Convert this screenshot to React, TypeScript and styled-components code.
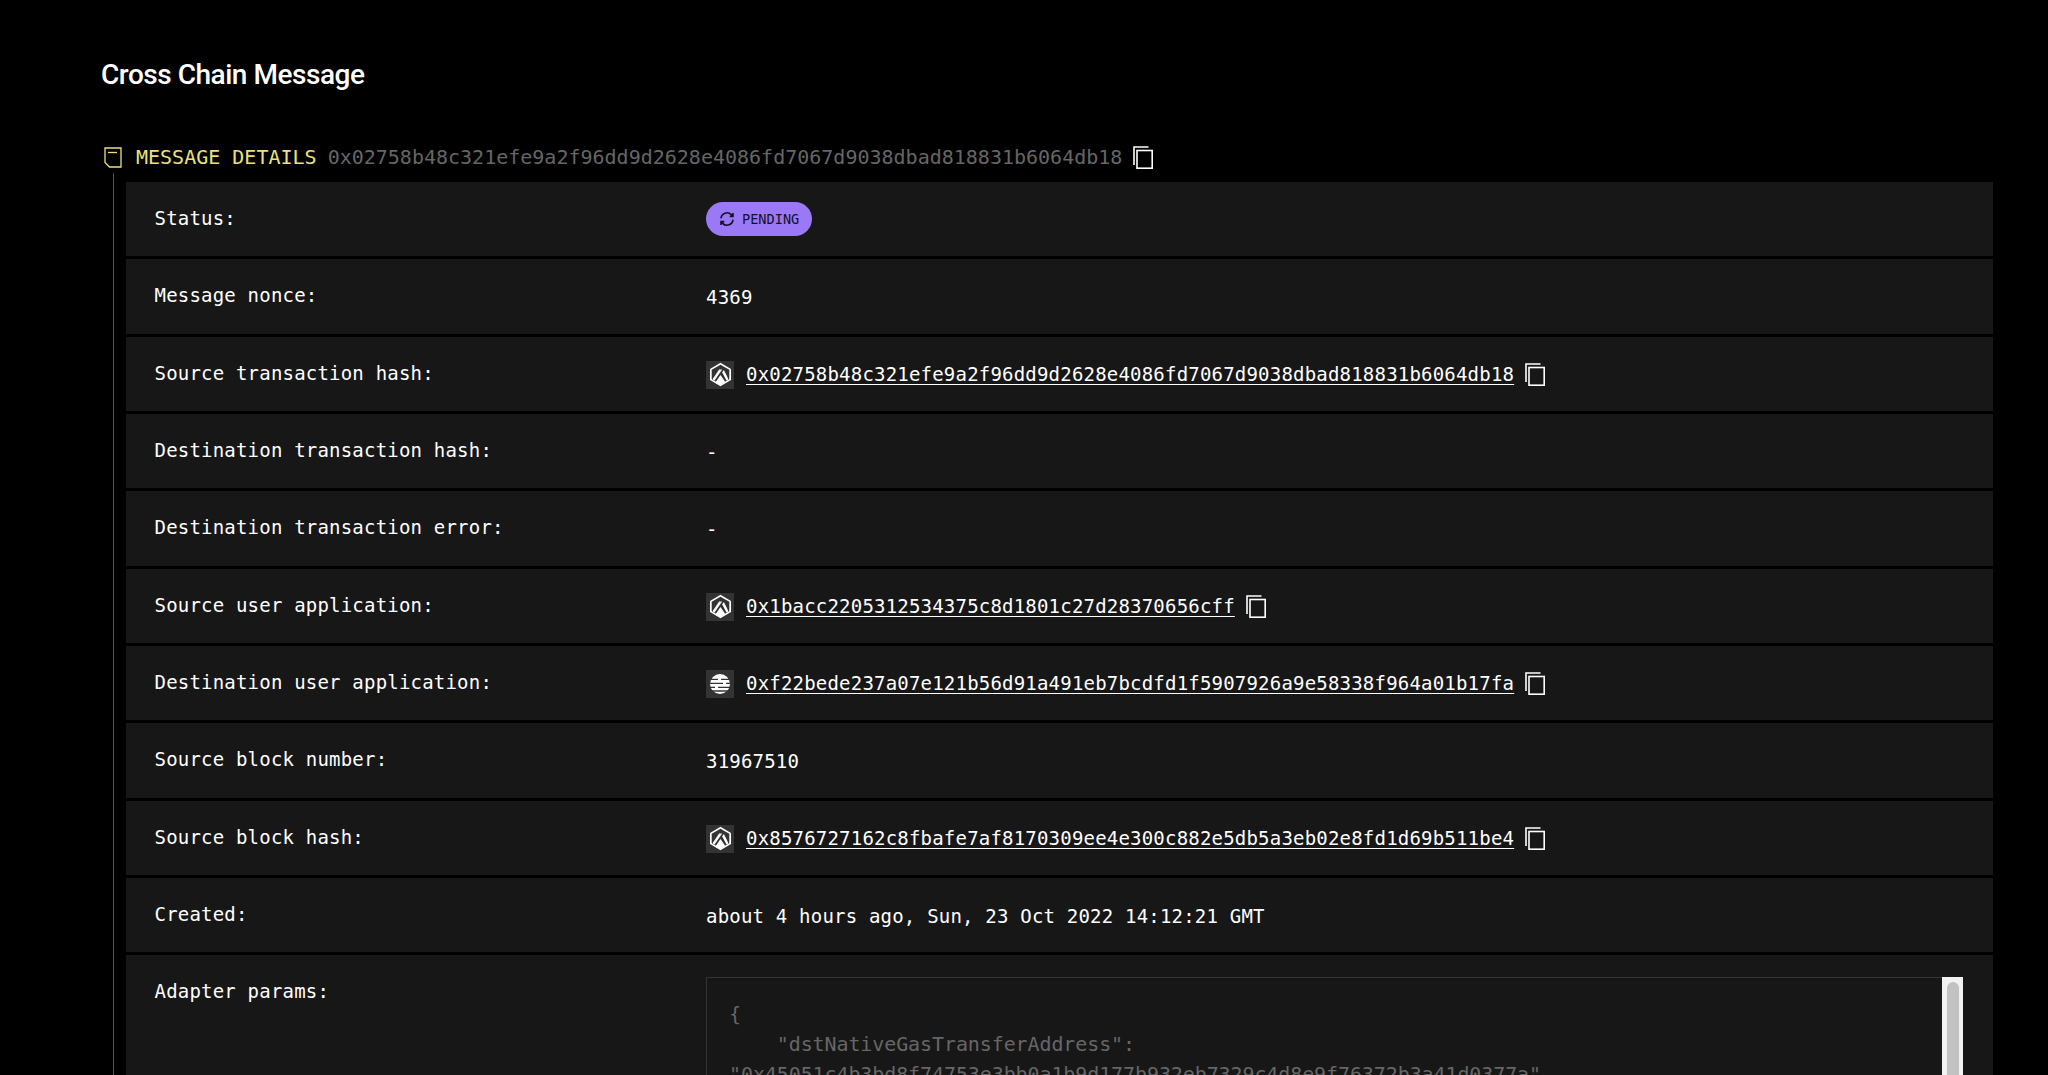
import styled, { createGlobalStyle } from 'styled-components'
import { ReactNode } from 'react'

const GlobalStyle = createGlobalStyle`
	html, body {
		margin: 0;
		height: 100%;
		overflow: hidden;
		background: #000;
	}
`

const ArbitrumIcon = () => (
	<svg width="25" height="25" viewBox="0 0 22 22" fill="none">
		<path d="M11 1.5 19.5 6.5V15.5L11 20.5 2.5 15.5V6.5Z" stroke="#fff" strokeWidth="1.5" strokeLinejoin="round" />
		<path d="M9.8 6.5H12.4L5.6 16.4 4 15.2Z" fill="#fff" />
		<path d="M12.4 9 14 7 18 15.2 16.4 16.4Z" fill="#fff" />
		<path d="M11 11.5 15.2 17.6 11 20.2 6.8 17.6Z" fill="#fff" />
	</svg>
)

const OptimismIcon = () => (
	<svg width="22" height="22" viewBox="0 0 22 22" fill="none">
		<circle cx="11" cy="11" r="10" fill="#fff" />
		<path d="M0 6.4H9M12 6.4H22M0 10.4H14M17 10.4H22M0 14.4H6M9 14.4H22M0 18H22" stroke="#333" strokeWidth="1.4" />
	</svg>
)

const CopyIcon = () => (
	<svg width="20" height="23" viewBox="0 0 20 23" fill="none" stroke="#fff" strokeWidth="1.6">
		<path d="M1 19V1H15.5" />
		<rect x="4" y="4.5" width="15.2" height="17.7" />
	</svg>
)

const NoteIcon = () => (
	<svg width="18" height="21" viewBox="0 0 18 21" fill="none" stroke="#ebe07e" strokeWidth="1.3">
		<path d="M1 1H17V20H5.5L1 15.5Z" />
		<path d="M4 5.5H13" />
	</svg>
)

const SyncIcon = () => (
	<svg width="16" height="16" viewBox="0 0 24 24" fill="none" stroke="#14102a" strokeWidth="2.4">
		<path d="M3 11a9 9 0 0 1 15.5-5.5L21 8M21 3v5h-5" />
		<path d="M21 13a9 9 0 0 1-15.5 5.5L3 16M3 21v-5h5" />
	</svg>
)

type Props = { label: string; children: ReactNode }
const Row = ({ label, children }: Props) => (
	<RowBox>
		<Label>{label}</Label>
		<Value>{children}</Value>
	</RowBox>
)

const Hash = ({ chain, text }: { chain: 'arb' | 'op'; text: string }) => (
	<HashLine>
		<ChainBox>{chain === 'arb' ? <ArbitrumIcon /> : <OptimismIcon />}</ChainBox>
		<HashLink>{text}</HashLink>
		<CopyIcon />
	</HashLine>
)

const params = `{
    "dstNativeGasTransferAddress": "0x45051c4b3bd8f74753e3bb0a1b9d177b932eb7329c4d8e9f76372b3a41d0377a",
    "dstNativeGasTransferAmount": "0",
    "type": 1
}`

export default function App(): JSX.Element {
	return (
		<Page>
			<GlobalStyle />
			<Title>Cross Chain Message</Title>
			<Header>
				<NoteIcon />
				<HeaderLabel>MESSAGE DETAILS</HeaderLabel>
				<HeaderHash>0x02758b48c321efe9a2f96dd9d2628e4086fd7067d9038dbad818831b6064db18</HeaderHash>
				<CopyIcon />
			</Header>
			<Rows>
				<Row label="Status:">
					<Badge><SyncIcon />PENDING</Badge>
				</Row>
				<Row label="Message nonce:">4369</Row>
				<Row label="Source transaction hash:">
					<Hash chain="arb" text="0x02758b48c321efe9a2f96dd9d2628e4086fd7067d9038dbad818831b6064db18" />
				</Row>
				<Row label="Destination transaction hash:">-</Row>
				<Row label="Destination transaction error:">-</Row>
				<Row label="Source user application:">
					<Hash chain="arb" text="0x1bacc2205312534375c8d1801c27d28370656cff" />
				</Row>
				<Row label="Destination user application:">
					<Hash chain="op" text="0xf22bede237a07e121b56d91a491eb7bcdfd1f5907926a9e58338f964a01b17fa" />
				</Row>
				<Row label="Source block number:">31967510</Row>
				<Row label="Source block hash:">
					<Hash chain="arb" text="0x8576727162c8fbafe7af8170309ee4e300c882e5db5a3eb02e8fd1d69b511be4" />
				</Row>
				<Row label="Created:">about 4 hours ago, Sun, 23 Oct 2022 14:12:21 GMT</Row>
				<Row label="Adapter params:">
					<ParamsBox>
						<Params>{params}</Params>
						<ScrollTrack>
							<ScrollThumb />
						</ScrollTrack>
					</ParamsBox>
				</Row>
			</Rows>
		</Page>
	)
}

const mono = `"DejaVu Sans Mono", "Liberation Mono", monospace`

const Page = styled.main`
	height: 1075px;
	overflow: hidden;
	padding: 57px 55px 0 101px;
	box-sizing: border-box;
	color: #fff;
`
const Title = styled.h1`
	margin: 0;
	font: 500 28px/36px Roboto, sans-serif;
	letter-spacing: -0.47px;
`
const Header = styled.div`
	display: flex;
	align-items: center;
	gap: 11px;
	margin-top: 52px;
	padding-left: 3px;
	height: 24px;
	font: 20px/24px ${mono};
`
const HeaderLabel = styled.span`
	margin-left: 3px;
	color: #ebe07e;
`
const HeaderHash = styled.span`
	color: #666;
`
const Rows = styled.div`
	display: flex;
	flex-direction: column;
	gap: 3px;
	margin-top: 4px;
	margin-left: 12px;
	padding: 9px 0 0 12px;
	border-left: 1px solid #555;
`
const RowBox = styled.div`
	display: grid;
	grid-template-columns: 551.5px 1fr;
	padding: 23px 30px 21.33px 28.5px;
	background: #171717;
`
const Label = styled.div`
	font: 19px/26px ${mono};
	letter-spacing: 0.2px;
	color: #fff;
`
const Value = styled.div`
	font: 19px/30px ${mono};
	letter-spacing: 0.2px;
	color: #fff;
`
const Badge = styled.span`
	display: flex;
	align-items: center;
	gap: 7px;
	width: fit-content;
	height: 34px;
	margin: -3px 0 -1px;
	padding: 0 13px;
	border-radius: 17px;
	background: #9b78f6;
	color: #14102a;
	font-size: 13.6px;
	letter-spacing: 0;
`
const HashLine = styled.div`
	display: flex;
	align-items: center;
	gap: 12px;
	height: 30px;
`
const ChainBox = styled.span`
	display: flex;
	align-items: center;
	justify-content: center;
	width: 28px;
	height: 28px;
	background: #333;
`
const HashLink = styled.a`
	margin: 0 -1px 2px 0;
	color: #fff;
	text-decoration: underline;
	text-underline-offset: 3px;
`
const ParamsBox = styled.div`
	position: relative;
	margin-top: -1px;
	height: 300px;
`
const Params = styled.pre`
	margin: 0;
	height: 100%;
	overflow: hidden;
	padding: 21px 45px 21px 22px;
	box-sizing: border-box;
	border: 1px solid #333;
	color: #666;
	font: 20px/30px ${mono};
	letter-spacing: -0.1px;
	white-space: pre-wrap;
`
const ScrollTrack = styled.div`
	position: absolute;
	top: 0;
	right: 0;
	bottom: 0;
	width: 21px;
	padding: 5px 4px 5px 5px;
	box-sizing: border-box;
	background: #f2f2f2;
`
const ScrollThumb = styled.div`
	height: 240px;
	border-radius: 6px;
	background: #c2c2c2;
`
